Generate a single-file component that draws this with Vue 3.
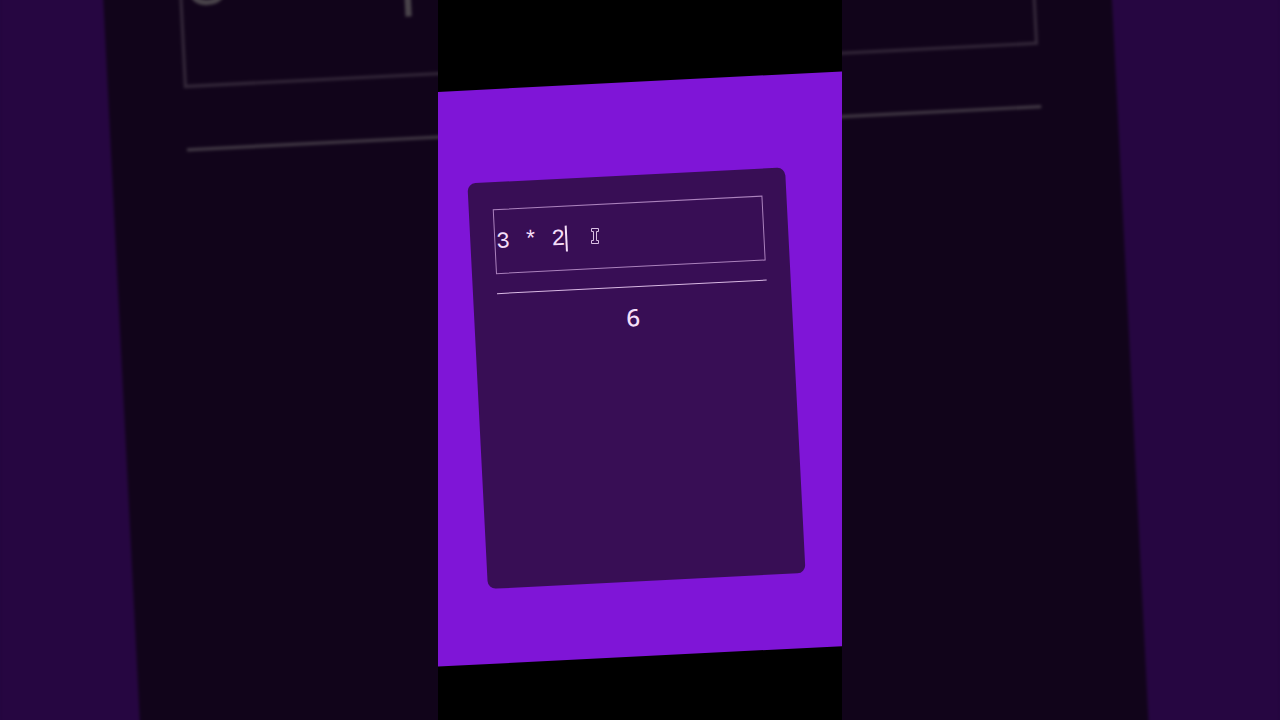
<script setup>
import { ref, computed } from 'vue'

const expression = ref('3 * 2')

const result = computed(() => {
  const m = expression.value.match(/^\s*(-?[\d.]+)\s*([-+*/])\s*(-?[\d.]+)\s*$/)
  if (!m) return ''
  const a = Number(m[1])
  const b = Number(m[3])
  return { '+': a + b, '-': a - b, '*': a * b, '/': a / b }[m[2]]
})

const layers = ['backdrop', 'phone']
</script>

<template>
  <main class="stage">
    <section
      v-for="layer in layers"
      :key="layer"
      :class="['scene', layer]"
      :inert="layer === 'backdrop'"
      :aria-hidden="layer === 'backdrop'"
    >
      <div class="band">
        <div class="card">
          <label class="field">
            <input v-model="expression" class="entry" type="text" aria-label="Expression" spellcheck="false" />
            <span class="caret"></span>
          </label>
          <hr class="rule" />
          <output class="result">{{ result }}</output>
        </div>
      </div>
      <svg v-if="layer === 'phone'" class="pointer" viewBox="0 0 8 16" aria-hidden="true">
        <path d="M.5 .5H7.5V3.5H5.5V12.5H7.5V15.5H.5V12.5H2.5V3.5H.5Z" />
      </svg>
    </section>
  </main>
</template>

<style>
body {
  background: #000;
}
</style>

<style scoped>
.stage {
  display: grid;
  place-items: center;
  height: 100vh;
  overflow: hidden;
  background: #250640;
}

.scene {
  grid-area: 1 / 1;
  position: relative;
  display: grid;
  place-items: center;
  height: 100vh;
  aspect-ratio: 101 / 180;
  overflow: hidden;
  background: #000;
}

.backdrop {
  transform: scale(3.168);
  filter: brightness(0.3) blur(0.5px);
}

.band {
  box-sizing: border-box;
  justify-self: center;
  width: 120%;
  margin-top: 18px;
  padding: 93px 9px 75px 0;
  background: #7f15d7;
  transform: rotate(-2.9deg);
}

.card {
  box-sizing: border-box;
  width: 318px;
  height: 406px;
  margin: 0 auto;
  padding: 27px 24px;
  border-radius: 8px;
  background: #380e55;
  color: #f4def8;
}

.field {
  position: relative;
  display: block;
  font: 23px "Liberation Mono", monospace;
}

.entry {
  box-sizing: border-box;
  display: block;
  width: 100%;
  height: 65px;
  padding: 0 1px;
  border: 1px solid #ab82bd;
  border-radius: 0;
  outline: none;
  background: transparent;
  color: inherit;
  font: inherit;
  caret-color: transparent;
}

.caret {
  position: absolute;
  top: 20px;
  left: calc(2px + 5ch);
  width: 2px;
  height: 26px;
  background: #f4def8;
}

.rule {
  height: 1px;
  margin: 19px 0 14px;
  border: 0;
  background: #d9b9e4;
}

.result {
  display: block;
  font: 500 24px/32px "Noto Sans", sans-serif;
  text-align: center;
}

.pointer {
  position: absolute;
  top: 228px;
  left: 153px;
  width: 8px;
  height: 16px;
  fill: #380e55;
  stroke: #d9bfe3;
  stroke-width: 1;
}
</style>
